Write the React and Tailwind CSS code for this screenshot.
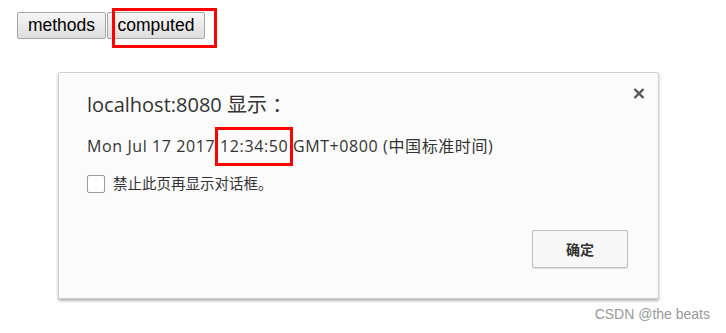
export default function App() {
  return (
    <div className="relative w-[726px] h-[333px] bg-white overflow-hidden" style={{ fontFamily: '"Open Sans", "Noto Sans CJK SC", sans-serif' }}>
      <div className="flex items-start pl-[17px] pt-[12px]" style={{ fontFamily: '"Liberation Sans", Arial, sans-serif' }}>
        <button className="h-[27px] w-[89px] text-[17.5px] leading-none text-black border border-[#a6a6a6] rounded-[2px] bg-gradient-to-b from-[#f6f6f6] to-[#dedede]">
          methods
        </button>
        <div className="relative ml-[1px]">
          <button className="h-[27px] w-[98px] text-[17.5px] leading-none text-black border border-[#a6a6a6] rounded-[2px] bg-gradient-to-b from-[#f6f6f6] to-[#dedede]">
            computed
          </button>
          <div className="absolute left-[5px] top-[-4px] w-[105px] h-[40px] border-[3px] border-[#f00]"></div>
        </div>
      </div>

      <div className="ml-[58px] mt-[33px] w-[601px] h-[227px] bg-[#fbfbfb] border border-[#d0d0d0] rounded-[2px] shadow-[0_2px_3px_rgba(0,0,0,0.3)] flex flex-col px-[28px] pt-[18px] relative">
        <svg className="absolute right-[13px] top-[15px]" width="12" height="11" viewBox="0 0 12 11">
          <path d="M1.5 1 L10.5 10 M10.5 1 L1.5 10" stroke="#555" strokeWidth="2.4" strokeLinecap="butt" />
        </svg>
        <div className="text-[20px] text-[#333] leading-[28px]">localhost:8080 显示 ：</div>
        <div className="mt-[16px] text-[16px] tracking-[0.6px] text-[#333] leading-[22px]">
          Mon Jul 17 2017{" "}
          <span className="relative">
            12:34:50
            <span className="absolute left-[-5px] top-[-8px] w-[78px] h-[39px] border-[3px] border-[#f00]"></span>
          </span>{" "}
          GMT+0800 (中国标准时间)
        </div>
        <div className="mt-[16px] flex items-center gap-[8px]">
          <div className="w-[18px] h-[18px] border border-[#9a9a9a] rounded-[2px] bg-white"></div>
          <span className="text-[14.5px] text-[#333]">禁止此页再显示对话框。</span>
        </div>
        <div className="mt-auto mb-[30px] flex justify-end pr-[2px]">
          <button className="w-[96px] h-[38px] border border-[#bdbdbd] rounded-[2px] bg-[#f7f7f7] shadow-[0_1px_1px_rgba(0,0,0,0.12)] text-[14px] font-bold text-[#333]">
            确定
          </button>
        </div>
      </div>

      <div className="absolute right-[16px] bottom-[8px] text-[14px] text-[#999]" style={{ fontFamily: '"Liberation Sans", Arial, sans-serif' }}>
        CSDN @the beats
      </div>
    </div>
  );
}
